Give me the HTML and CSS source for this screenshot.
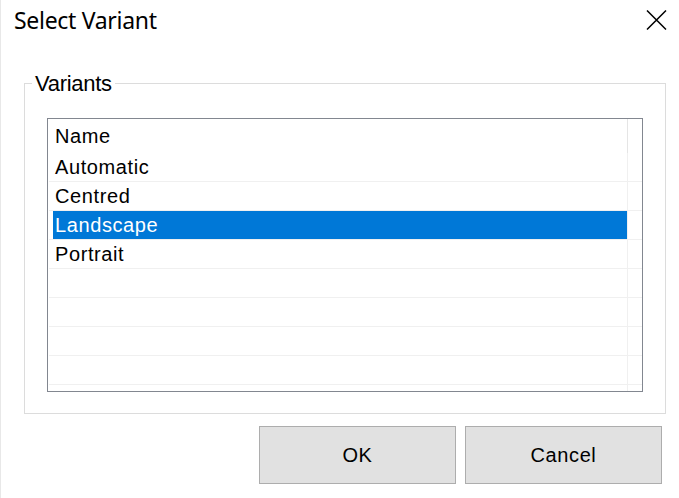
FILE: index.html
```html
<!DOCTYPE html>
<html>
<head>
<meta charset="utf-8">
<title>Select Variant</title>
<link rel="stylesheet" href="styles.css">
</head>
<body>
<div class="window">
  <div class="titlebar">
    <span class="title">Select Variant</span>
    <svg class="close" width="21" height="20" viewBox="0 0 21 20" aria-label="Close">
      <path d="M1 0.5 L20 19.5 M20 0.5 L1 19.5" stroke="#000" stroke-width="1.5" fill="none"/>
    </svg>
  </div>
  <div class="group">
    <span class="group-label">Variants</span>
    <div class="listbox">
      <div class="header"><div class="hcell">Name</div></div>
      <div class="row"><div class="cell"><span class="item">Automatic</span></div></div>
      <div class="row"><div class="cell"><span class="item">Centred</span></div></div>
      <div class="row"><div class="cell"><span class="item selected">Landscape</span></div></div>
      <div class="row"><div class="cell"><span class="item">Portrait</span></div></div>
      <div class="row"><div class="cell"></div></div>
      <div class="row"><div class="cell"></div></div>
      <div class="row"><div class="cell"></div></div>
      <div class="row"><div class="cell"></div></div>
      <div class="row"><div class="cell"></div></div>
    </div>
  </div>
  <div class="buttons">
    <button class="btn">OK</button>
    <button class="btn">Cancel</button>
  </div>
</div>
</body>
</html>
```
FILE: styles.css
```css
html, body {
  margin: 0;
  padding: 0;
  background: #ffffff;
}
.window {
  box-sizing: border-box;
  width: 679px;
  height: 498px;
  border-left: 1px solid #e8e8e8;
  background: #ffffff;
  overflow: hidden;
  font-family: "Liberation Sans", Arial, sans-serif;
  color: #000;
}
.titlebar {
  height: 40px;
  display: flex;
  justify-content: space-between;
  align-items: flex-start;
  padding: 0 12px 0 13px;
}
.title {
  font-family: "Noto Sans", "Open Sans", sans-serif;
  font-size: 23px;
  line-height: 23px;
  letter-spacing: -0.3px;
  padding-top: 9px;
}
.close {
  display: block;
  margin-top: 10px;
}
.group {
  position: relative;
  box-sizing: border-box;
  width: 642px;
  height: 331px;
  margin: 43px 0 0 23px;
  border: 1px solid #dcdcdc;
  padding: 34px 22px 21px 22px;
}
.group-label {
  position: absolute;
  left: 7px;
  top: -11px;
  padding: 0 3px;
  background: #fff;
  font-size: 22px;
  line-height: 22px;
  letter-spacing: -0.3px;
}
.listbox {
  box-sizing: border-box;
  width: 596px;
  height: 274px;
  border: 1px solid #828790;
  overflow: hidden;
  font-size: 20px;
  letter-spacing: 0.6px;
}
.header {
  height: 34px;
}
.hcell {
  box-sizing: border-box;
  width: 580px;
  height: 34px;
  line-height: 35px;
  padding-left: 7px;
  border-right: 1px solid #e5e5e5;
}
.row {
  box-sizing: border-box;
  width: 593px;
  height: 29px;
  margin-left: 1px;
  border-bottom: 1px solid #f0f0f0;
}
.cell {
  box-sizing: border-box;
  width: 579px;
  height: 28px;
  padding-left: 4px;
  border-right: 1px solid #f0f0f0;
}
.item {
  display: block;
  height: 28px;
  line-height: 29px;
  padding-left: 2px;
}
.item.selected {
  background: #0078d7;
  color: #ffffff;
}
.buttons {
  display: flex;
  justify-content: flex-end;
  gap: 9px;
  width: 642px;
  margin: 12px 0 0 23px;
  padding-right: 4px;
  box-sizing: border-box;
}
.btn {
  box-sizing: border-box;
  width: 197px;
  height: 58px;
  margin: 0;
  padding: 0;
  background: #e1e1e1;
  border: 1px solid #adadad;
  border-radius: 0;
  font-family: "Liberation Sans", Arial, sans-serif;
  font-size: 20px;
  letter-spacing: 0.6px;
  color: #000;
}
```
